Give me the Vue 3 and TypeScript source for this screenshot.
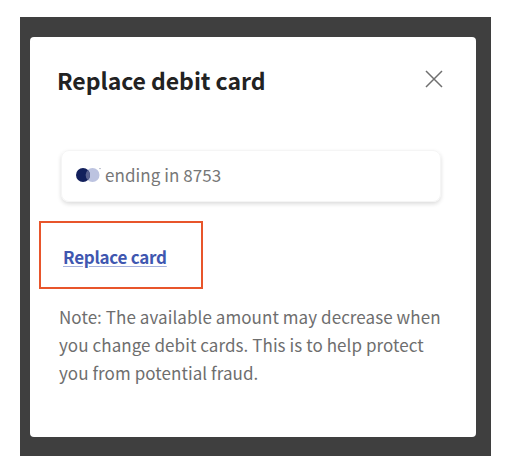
<script setup lang="ts">
const note: string = 'Note: The available amount may decrease when you change debit cards. This is to help protect you from potential fraud.'
</script>

<template>
  <div class="page">
    <div class="backdrop">
      <section class="modal">
        <header class="head">
          <h1 class="title">Replace debit card</h1>
          <svg class="close" width="20" height="20" viewBox="0 0 20 20" aria-label="Close">
            <path d="M2 2 L18 18 M18 2 L2 18" fill="none" stroke="#6f6f6f" stroke-width="1.5" />
          </svg>
        </header>
        <div class="card">
          <svg class="logo" width="26" height="18" viewBox="0 0 26 18">
            <circle cx="17.5" cy="9" r="7" fill="#bcc3e0" />
            <circle cx="8" cy="9" r="7" fill="#12205c" />
            <path d="M12.8 3.9 A7 7 0 0 1 12.8 14.1 A7 7 0 0 1 12.8 3.9 Z" fill="#5a628f" />
            <circle cx="25" cy="2.6" r="0.7" fill="#8a8fa8" />
          </svg>
          <span class="ending">ending in 8753</span>
        </div>
        <div class="highlight">
          <a class="link" href="#">Replace card</a>
        </div>
        <p class="note">{{ note }}</p>
      </section>
    </div>
  </div>
</template>

<style scoped>
.page {
  width: 512px;
  height: 476px;
  box-sizing: border-box;
  padding: 17px 21px 20px 20px;
  background: #fff;
  font-family: "Noto Sans CJK SC", "Source Sans Pro", "Noto Sans", sans-serif;
}
.backdrop {
  height: 100%;
  box-sizing: border-box;
  padding: 20px 15px 19px 10px;
  background: #3f3f3f;
}
.modal {
  height: 100%;
  box-sizing: border-box;
  padding: 29px 32px 0 28px;
  background: #fff;
  border-radius: 4px;
}
.head {
  display: flex;
  align-items: center;
  justify-content: space-between;
  height: 30px;
}
.title {
  margin: -2px 0 0 -1px;
  font-size: 23px;
  line-height: 30px;
  font-weight: 700;
  letter-spacing: -0.05px;
  color: #222;
}
.close {
  margin-top: -4px;
  margin-right: 0;
}
.card {
  display: flex;
  align-items: center;
  gap: 4px;
  width: 380px;
  height: 52px;
  box-sizing: border-box;
  margin: 54px 0 0 3px;
  padding: 0 0 2px 13px;
  border: 1px solid #f5f5f5;
  border-radius: 8px;
  box-shadow: 0 2px 4px rgba(0, 0, 0, 0.14);
}
.ending {
  font-size: 17px;
  line-height: 24px;
  color: #777;
  letter-spacing: 0.07px;
}
.highlight {
  display: flex;
  align-items: center;
  width: 164px;
  height: 68px;
  box-sizing: border-box;
  margin: 19px 0 0 -19px;
  padding: 3px 0 0 22px;
  border: 2px solid #e8552b;
}
.link {
  font-size: 17px;
  line-height: 24px;
  font-weight: 700;
  letter-spacing: -0.25px;
  color: #3f57b0;
  text-decoration: underline;
  text-decoration-color: #a5b1dd;
  text-underline-offset: 2px;
}
.note {
  margin: 14px -6px 0 1px;
  font-size: 17px;
  line-height: 28px;
  color: #6e6e6e;
  letter-spacing: 0.07px;
}
</style>
